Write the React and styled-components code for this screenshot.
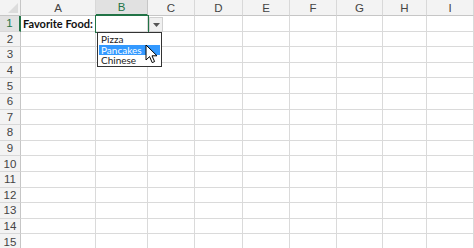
import React from 'react'
import styled, { createGlobalStyle } from 'styled-components'

const GlobalStyle = createGlobalStyle`
  html, body {
    margin: 0;
    padding: 0;
    background: #ffffff;
  }
  body {
    font-family: 'Lato', 'Liberation Sans', sans-serif;
  }
`

const columns = ['A', 'B', 'C', 'D', 'E', 'F', 'G', 'H', 'I']
const rows = Array.from({ length: 15 }, (_, i) => i + 1)
const options = ['Pizza', 'Pancakes', 'Chinese']

const App = () => {
  return (
    <>
      <GlobalStyle />
      <Sheet>
        <Corner>
          <svg width="10" height="10" viewBox="0 0 10 10">
            <polygon points="10,0 10,10 0,10" fill="#dcdcdc" />
          </svg>
        </Corner>
        {columns.map(c => (
          <ColHeader key={c} active={c === 'B'}>
            {c}
          </ColHeader>
        ))}
        {rows.map(r => (
          <React.Fragment key={r}>
            <RowHeader active={r === 1}>{r}</RowHeader>
            {columns.map(c => (
              <Cell key={c}>{r === 1 && c === 'A' ? <Label>Favorite Food:</Label> : null}</Cell>
            ))}
          </React.Fragment>
        ))}

        <Selected />
        <DropButton>
          <svg width="7" height="4" viewBox="0 0 7 4">
            <polygon points="0,0 7,0 3.5,4" fill="#555" />
          </svg>
        </DropButton>
        <ListBox>
          {options.map(o => (
            <Option key={o} highlight={o === 'Pancakes'}>
              {o}
            </Option>
          ))}
        </ListBox>
        <Cursor width="14" height="21" viewBox="0 0 14 21">
          <path
            d="M1 1 L1 16 L4.6 12.6 L7.2 18.6 L9.6 17.6 L7 11.8 L12 11.8 Z"
            fill="#ffffff"
            stroke="#000000"
            strokeWidth="1"
            strokeLinejoin="miter"
          />
        </Cursor>
      </Sheet>
    </>
  )
}

export default App

const Sheet = styled.div`
  position: relative;
  display: grid;
  grid-template-columns: 21px 75px 52px 47px 48px 47px 47px 46px 44px 1fr;
  grid-template-rows: 16px repeat(15, 15.6px);
  width: 474px;
  height: 248px;
  overflow: hidden;
  background: #ffffff;
`

const Corner = styled.div`
  background: #f3f3f3;
  border-right: 1px solid #c6c6c6;
  border-bottom: 1px solid #c6c6c6;
  display: flex;
  align-items: flex-end;
  justify-content: flex-end;
  padding: 0 2px 2px 0;
  box-sizing: border-box;
`

const ColHeader = styled.div`
  background: ${p => (p.active ? '#e1e1e1' : '#f3f3f3')};
  color: ${p => (p.active ? '#217346' : '#444444')};
  border-right: 1px solid ${p => (p.active ? '#c6c6c6' : '#d8d8d8')};
  border-bottom: ${p => (p.active ? '2px solid #217346' : '1px solid #c6c6c6')};
  font-family: 'Liberation Sans', Arial, sans-serif;
  font-size: 11.5px;
  display: flex;
  align-items: center;
  justify-content: center;
  box-sizing: border-box;
`

const RowHeader = styled.div`
  background: ${p => (p.active ? '#e1e1e1' : '#f3f3f3')};
  color: ${p => (p.active ? '#217346' : '#444444')};
  border-right: ${p => (p.active ? '2px solid #217346' : '1px solid #c6c6c6')};
  border-bottom: 1px solid #d8d8d8;
  font-family: 'Liberation Sans', Arial, sans-serif;
  font-size: 11.5px;
  display: flex;
  align-items: center;
  justify-content: center;
  box-sizing: border-box;
`

const Cell = styled.div`
  border-right: 1px solid #dadada;
  border-bottom: 1px solid #dadada;
  box-sizing: border-box;
  display: flex;
  align-items: center;
  overflow: visible;
  white-space: nowrap;
`

const Label = styled.span`
  font-family: 'Lato', 'Liberation Sans', sans-serif;
  font-weight: 700;
  font-size: 11px;
  color: #111111;
  padding-left: 2px;
`

const Selected = styled.div`
  position: absolute;
  left: 95px;
  top: 15px;
  width: 54px;
  height: 18px;
  border: 1.5px solid #217346;
  box-sizing: border-box;
`

const DropButton = styled.div`
  position: absolute;
  left: 149px;
  top: 17px;
  width: 14px;
  height: 15px;
  background: #f0f0f0;
  border: 1px solid #d0d0d0;
  box-sizing: border-box;
  display: flex;
  align-items: center;
  justify-content: center;
`

const ListBox = styled.div`
  position: absolute;
  left: 97px;
  top: 32px;
  width: 65px;
  padding: 1px 1px 0;
  background: #ffffff;
  border: 1px solid #333333;
  box-sizing: border-box;
  display: flex;
  flex-direction: column;
`

const Option = styled.div`
  height: 10.5px;
  line-height: 10.5px;
  font-family: 'Lato', 'Liberation Sans', sans-serif;
  font-size: 10px;
  padding-left: 2px;
  color: ${p => (p.highlight ? '#ffffff' : '#222222')};
  background: ${p => (p.highlight ? '#3399ff' : 'transparent')};
`

const Cursor = styled.svg`
  position: absolute;
  left: 145px;
  top: 44px;
`
